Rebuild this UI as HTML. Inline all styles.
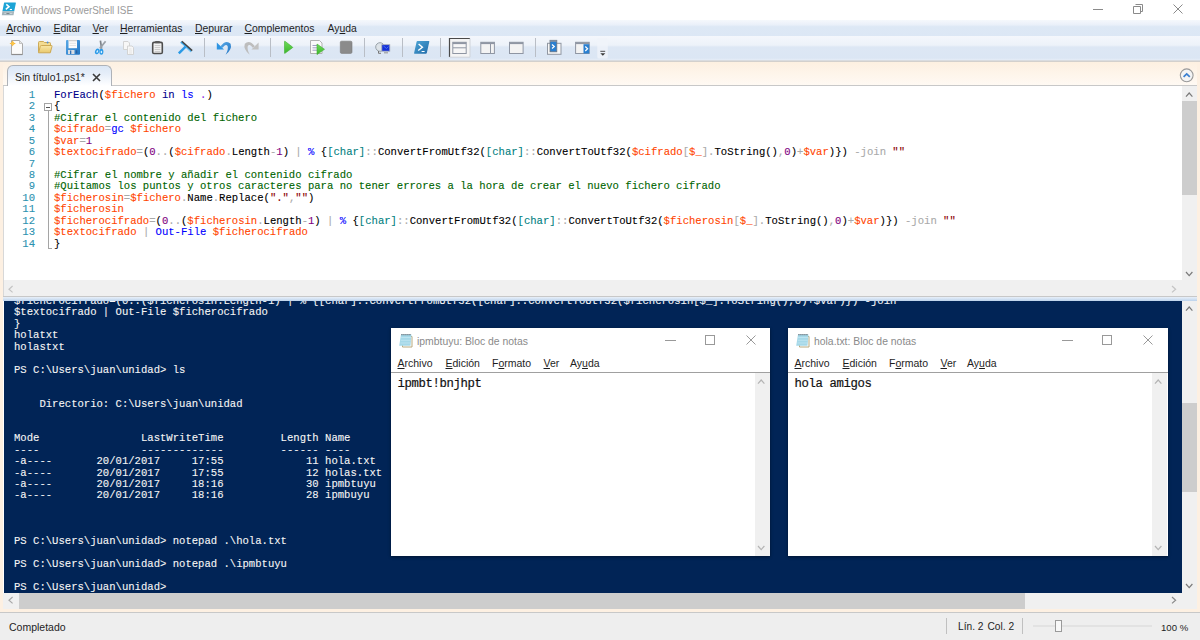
<!DOCTYPE html><html><head><meta charset="utf-8"><style>
*{box-sizing:border-box}
html,body{margin:0;padding:0;width:1200px;height:640px;overflow:hidden;background:#fff;position:relative;font-family:"Liberation Sans",sans-serif}
.a{position:absolute}
.t{position:absolute;white-space:pre;font-family:"Liberation Sans",sans-serif}
.m{position:absolute;white-space:pre;font-family:"Liberation Mono",monospace;-webkit-text-stroke:0.1px currentColor}
u{text-decoration:underline;text-decoration-thickness:1px;text-underline-offset:0.5px}
</style></head><body>
<div class="a" style="left:0;top:0;width:1200px;height:20px;background:#fff"></div>
<svg class="a" style="left:0;top:0" width="18" height="18" viewBox="0 0 18 18">
<path d="M4.3 2.6 H15.6 Q16 2.6 15.9 3 L14.2 11.3 H2.4 L4 3 Q4.1 2.6 4.3 2.6 Z" fill="#1ca4d6"/>
<path d="M2.4 11.3 H14.2 L13.5 15.3 H1.8 Z" fill="#a3b3ba"/>
<path d="M4.5 12.7 H12.5 L12.2 14 H4.2 Z" fill="#c9d4d8"/>
<path d="M6.5 12.9 H9.5 V13.8 H6.3 Z" fill="#5f6e74"/>
<path d="M6.3 4.4 L9 6.7 L5.8 9.3" stroke="#fff" stroke-width="1.5" fill="none"/>
<path d="M9.8 9.5 H12" stroke="#fff" stroke-width="1.1"/>
</svg>
<div class="t" style="left:20.7px;top:4.51px;font-size:10.5px;line-height:10.5px;color:#9a9a9a;transform:scaleX(0.946);transform-origin:0 0">Windows PowerShell ISE</div>
<div class="a" style="left:1093px;top:9px;width:10px;height:1px;background:#8a8a8a"></div>
<svg class="a" style="left:1132px;top:3px" width="12" height="12" viewBox="0 0 12 12">
<path d="M3.5 1.5 H10.5 V8.5 H8.5 M1.5 3.5 H8.5 V10.5 H1.5 Z" stroke="#8a8a8a" stroke-width="1" fill="none"/></svg>
<svg class="a" style="left:1173px;top:4px" width="10" height="10" viewBox="0 0 10 10">
<path d="M0.5 0.5 L9.5 9.5 M9.5 0.5 L0.5 9.5" stroke="#8a8a8a" stroke-width="1" fill="none"/></svg>
<div class="a" style="left:0;top:20px;width:1200px;height:16px;background:linear-gradient(#f5f8fc,#eaf0f9 30%,#dde8f5 42%,#dce7f5)"></div>
<div class="t" style="left:6.3px;top:23.70px;font-size:10.4px;line-height:10.4px;color:#1e1e1e;"><u>A</u>rchivo</div>
<div class="t" style="left:53.5px;top:23.70px;font-size:10.4px;line-height:10.4px;color:#1e1e1e;"><u>E</u>ditar</div>
<div class="t" style="left:92.5px;top:23.70px;font-size:10.4px;line-height:10.4px;color:#1e1e1e;"><u>V</u>er</div>
<div class="t" style="left:120px;top:23.70px;font-size:10.4px;line-height:10.4px;color:#1e1e1e;"><u>H</u>erramientas</div>
<div class="t" style="left:195px;top:23.70px;font-size:10.4px;line-height:10.4px;color:#1e1e1e;"><u>D</u>epurar</div>
<div class="t" style="left:244.5px;top:23.70px;font-size:10.4px;line-height:10.4px;color:#1e1e1e;"><u>C</u>omplementos</div>
<div class="t" style="left:327.6px;top:23.70px;font-size:10.4px;line-height:10.4px;color:#1e1e1e;">Ay<u>u</u>da</div>
<div class="a" style="left:0;top:36px;width:1200px;height:24px;background:linear-gradient(#f4f7fc,#edf2f9 38%,#dde7f4 46%,#dbe6f4 92%,#e6edf7)"></div>
<div class="a" style="left:0;top:60px;width:1200px;height:1px;background:#dadcdf"></div>
<div class="a" style="left:0;top:61px;width:1200px;height:1px;background:#d3d0cd"></div>
<svg class="a" style="left:0;top:0" width="620" height="62" viewBox="0 0 620 62">
<defs>
<linearGradient id="gfold" x1="0" y1="0" x2="0" y2="1"><stop offset="0" stop-color="#f8e7a8"/><stop offset="1" stop-color="#e9c96d"/></linearGradient>
<linearGradient id="gblue" x1="0" y1="0" x2="1" y2="1"><stop offset="0" stop-color="#5aa9e6"/><stop offset="1" stop-color="#1f74c4"/></linearGradient>
<linearGradient id="ggreen" x1="0" y1="0" x2="0" y2="1"><stop offset="0" stop-color="#6fdc5a"/><stop offset="1" stop-color="#3bb52c"/></linearGradient>
<linearGradient id="gps" x1="0" y1="0" x2="1" y2="1"><stop offset="0" stop-color="#4fa6d6"/><stop offset="1" stop-color="#1f6aa8"/></linearGradient>
</defs>
<!-- new -->
<path d="M11.5 40.5 H19.5 L22.5 43.5 V54.5 H11.5 Z" fill="#fbfbfb" stroke="#a9a9a9" stroke-width="1"/>
<path d="M11.5 54.5 H22.5" stroke="#8d8d8d" stroke-width="1.2"/>
<path d="M19.5 40.5 V43.5 H22.5" fill="#e6e6e6" stroke="#b9b9b9" stroke-width="0.8"/>
<path d="M12.7 40.2 L13.6 42.4 L15.9 43.4 L13.6 44.4 L12.7 46.6 L11.8 44.4 L9.5 43.4 L11.8 42.4 Z" fill="#f7b22a"/>
<circle cx="12.7" cy="43.4" r="1.6" fill="#fbc54a"/>
<!-- open -->
<path d="M38.5 42.5 Q38.5 41.5 39.5 41.5 H43.5 L44.5 42.5 H49.5 Q50.5 42.5 50.5 43.5 V51.5 H38.5 Z" fill="#f3dc92" stroke="#c9a44c" stroke-width="0.9"/>
<path d="M38.5 52.8 L40.3 46.3 Q40.5 45.5 41.5 45.5 H51.5 Q52.3 45.5 52 46.3 L50.3 52.8 Z" fill="url(#gfold)" stroke="#c9a44c" stroke-width="0.9"/>
<circle cx="47.6" cy="42.5" r="0.9" fill="#4a8fd8"/>
<!-- save -->
<rect x="66" y="40" width="14" height="14.7" rx="1" fill="url(#gblue)"/>
<rect x="68.5" y="40" width="8.5" height="8.2" fill="#fbfbfb"/>
<rect x="68.5" y="40" width="8.5" height="1.3" fill="#cfcfcf"/>
<path d="M69.5 43.3 H76 M69.5 45.5 H76" stroke="#d5d5d5" stroke-width="0.6"/>
<rect x="68" y="50" width="6.5" height="4" fill="#d8dde3"/>
<rect x="70" y="50.5" width="1.3" height="3.5" fill="#2f6fb5"/>
<rect x="75.8" y="50.3" width="1.5" height="3.2" fill="#2a5f9f"/>
<!-- cut -->
<path d="M100.4 40.6 L101.6 48.6" stroke="#7d838a" stroke-width="1.7"/>
<path d="M105.6 41.2 L99.9 48.4" stroke="#9ba1a8" stroke-width="1.7"/>
<ellipse cx="97.2" cy="51.3" rx="2.1" ry="2.9" fill="#2a9ae8" transform="rotate(25 97.2 51.3)"/>
<ellipse cx="101.4" cy="51.8" rx="2" ry="3" fill="#2a9ae8"/>
<ellipse cx="97.3" cy="51.5" rx="0.8" ry="1.3" fill="#d8f0ff" transform="rotate(25 97.3 51.5)"/>
<ellipse cx="101.4" cy="52" rx="0.8" ry="1.3" fill="#d8f0ff"/>
<!-- copy (disabled) -->
<path d="M123.5 41.5 H128 L129.5 43 V49.5 H123.5 Z" fill="#f7f7f7" stroke="#cfcfcf" stroke-width="0.9"/>
<path d="M127.5 46 H132 L133.5 47.5 V54.5 H127.5 Z" fill="#f7f7f7" stroke="#cfcfcf" stroke-width="0.9"/>
<path d="M129 49 H131.5 M129 51 H132 M129 53 H132" stroke="#d8d8d8" stroke-width="0.6"/>
<!-- paste -->
<rect x="152.7" y="42.4" width="9.6" height="11.1" rx="1.3" fill="#f4f4f4" stroke="#4d4d4d" stroke-width="1.6"/>
<rect x="155.2" y="41" width="4.6" height="2.2" rx="0.5" fill="#5a5a5a"/>
<path d="M154.6 45.6 H160.4 M154.6 47.6 H160.4 M154.6 49.6 H160.4 M154.6 51.6 H160.4" stroke="#bdbdbd" stroke-width="0.8"/>
<!-- clear -->
<path d="M180.2 42.8 L181.8 41.2 L192.2 50.6 L190.6 52.2 Z" fill="#3aa6ea"/>
<path d="M181.8 41.2 L192.2 50.6" stroke="#444" stroke-width="1.5"/>
<path d="M181.4 43.6 L190.6 51.8" stroke="#bfe6fb" stroke-width="0.7"/>
<path d="M185.6 46.6 L178.8 53.4" stroke="#2a9ae6" stroke-width="2.4"/>
<!-- separators -->
<path d="M204.5 38 V57 M270.5 38 V57 M364.5 38 V57 M402.5 38 V57 M440.5 38 V57 M535.5 38 V57" stroke="#b9bec6" stroke-width="1"/>
<!-- undo -->
<path d="M220.5 46.2 Q226 39.2 230.6 43.8 Q232.4 49.5 225.6 54.8 Q228.6 49.5 227.6 46 Q225.6 43.3 222.6 47.8 Z" fill="url(#gblue)"/>
<path d="M216.8 42.6 L216.8 49.6 L224 49.6 Z" fill="#2f95e2"/>
<!-- redo (disabled) -->
<g transform="translate(475.4 0) scale(-1 1)"><path d="M220.5 46.2 Q226 39.2 230.6 43.8 Q232.4 49.5 225.6 54.8 Q228.6 49.5 227.6 46 Q225.6 43.3 222.6 47.8 Z" fill="#bdbdbd"/>
<path d="M216.8 42.6 L216.8 49.6 L224 49.6 Z" fill="#c2c2c2"/></g>
<!-- run -->
<path d="M284.5 41.5 Q284.5 41 285 41.3 L292.5 47 Q293 47.3 292.5 47.7 L285 53.3 Q284.5 53.6 284.5 53 Z" fill="url(#ggreen)" stroke="#3fb030" stroke-width="0.6"/>
<!-- run selection -->
<path d="M310.5 40.5 H319.5 L322 43 V53.5 H310.5 Z" fill="#fafafa" stroke="#a9a9a9" stroke-width="0.9"/>
<path d="M312.5 45.5 H317 M312.5 47.8 H317 M312.5 50.2 H317" stroke="#8a86b8" stroke-width="0.8"/>
<path d="M317 44 L324.5 49.3 L317 54.6 Z" fill="url(#ggreen)" stroke="#3fb030" stroke-width="0.6"/>
<!-- stop -->
<rect x="340.3" y="41.2" width="11.7" height="12.2" rx="1.3" fill="#8b8b8b" stroke="#7a7a7a" stroke-width="0.6"/>
<!-- remote -->
<circle cx="380" cy="47" r="4.3" fill="#dde3e8" stroke="#9aa3aa" stroke-width="1"/>
<path d="M378.5 51 V53.3 H381" stroke="#777" stroke-width="1" fill="none"/>
<rect x="381.8" y="44.7" width="8" height="6.5" fill="#1430d8" stroke="#a9b0b8" stroke-width="0.8"/>
<path d="M383.5 46 L386.5 48.5 L388.5 46.5" stroke="#4f7ff0" stroke-width="0.8" fill="none"/>
<path d="M384 52.8 H388" stroke="#a0a0a0" stroke-width="1.2"/>
<!-- powershell -->
<path d="M417.5 41 H428.8 Q429.5 41 429.3 41.8 L426.8 53 Q426.6 53.8 425.8 53.8 H414.6 Q413.9 53.8 414.1 53 L416.6 41.8 Q416.8 41 417.5 41 Z" fill="url(#gps)"/>
<path d="M418.6 44 L422.4 47.2 L418.2 50.5" stroke="#fff" stroke-width="1.4" fill="none"/>
<path d="M421.6 51.5 H424.6" stroke="#fff" stroke-width="1"/>
<!-- layout selected -->
<rect x="449" y="38.2" width="21" height="19" fill="#f4f4f4"/>
<path d="M449.5 57 V38.5 H470" stroke="#4a4a4a" stroke-width="1.2" fill="none"/>
<path d="M470 38.5 V57.2 H449.5" stroke="#cfd4da" stroke-width="1" fill="none"/>
<rect x="452.8" y="42.3" width="13.4" height="11.2" fill="#f6f6f6" stroke="#8f96a3" stroke-width="1"/>
<rect x="452.8" y="42.3" width="13.4" height="1.8" fill="#8f96a3"/>
<path d="M453 47.8 H466" stroke="#8f96a3" stroke-width="1"/>
<!-- layout right -->
<rect x="480.8" y="42.3" width="13.6" height="11.2" fill="#f3f3f3" stroke="#8f96a3" stroke-width="1"/>
<rect x="480.8" y="42.3" width="13.6" height="1.8" fill="#8f96a3"/>
<path d="M490.5 44 V53.5" stroke="#8f96a3" stroke-width="1"/>
<!-- layout max -->
<rect x="509.5" y="42.3" width="13.6" height="11.2" fill="#f3f3f3" stroke="#8f96a3" stroke-width="1"/>
<rect x="509.5" y="42.3" width="13.6" height="1.8" fill="#8f96a3"/>
<!-- show script pane top -->
<rect x="547.5" y="43.3" width="13.5" height="11" fill="#f7f7f7" stroke="#9097a2" stroke-width="1"/>
<rect x="550" y="40.3" width="6.8" height="11.5" fill="#2a7fd0" stroke="#6b7480" stroke-width="0.8"/>
<rect x="550" y="40.3" width="6.8" height="1.5" fill="#8a93a0"/>
<path d="M552 44.5 L554.3 46.5 L552 48.5" stroke="#fff" stroke-width="1.2" fill="none"/>
<!-- script pane right -->
<rect x="575.6" y="42.3" width="13.6" height="11.2" fill="#f3f3f3" stroke="#8f96a3" stroke-width="1"/>
<rect x="575.6" y="42.3" width="13.6" height="1.8" fill="#8f96a3"/>
<rect x="583.5" y="44.2" width="5.8" height="9.3" fill="#2a7fd0"/>
<path d="M585.3 46.5 L587.6 48.8 L585.3 51" stroke="#fff" stroke-width="1.2" fill="none"/>
<!-- overflow -->
<rect x="597.3" y="38" width="10.5" height="20.5" rx="1.5" fill="#f0f4fa" opacity="0.8"/>
<path d="M600.3 51.3 H605.2" stroke="#3a3a3a" stroke-width="0.9"/>
<path d="M600.3 53.2 H605.3 L602.8 55.8 Z" fill="#3a3a3a"/>
</svg>
<div class="a" style="left:0;top:62px;width:1200px;height:24px;background:linear-gradient(#fdf0e1,#fffaf4)"></div>
<div class="a" style="left:0;top:85px;width:1200px;height:1px;background:#c8c8c8"></div>
<div class="a" style="left:7px;top:65px;width:105px;height:21px;border:1px solid #aeb2b8;border-bottom:none;border-radius:6px 6px 0 0;background:linear-gradient(#dbe7f6,#e6eef9 40%,#fff)"></div>
<div class="t" style="left:15px;top:72.50px;font-size:10.4px;line-height:10.4px;color:#1e1e1e;">Sin título1.ps1*</div>
<svg class="a" style="left:92px;top:73px" width="9" height="9" viewBox="0 0 9 9">
<path d="M1 1 L8 8 M8 1 L1 8" stroke="#3a3a3a" stroke-width="1.6"/></svg>
<svg class="a" style="left:1179px;top:68px" width="16" height="16" viewBox="0 0 16 16">
<circle cx="7.7" cy="7.3" r="6.4" fill="#f4f4f4" stroke="#9a9a9a" stroke-width="1.1"/>
<path d="M4.6 8.8 L7.7 5.9 L10.8 8.8" stroke="#3a7fd0" stroke-width="1.8" fill="none"/></svg>
<div class="a" style="left:0;top:62px;width:3px;height:550px;background:#fdf0e2"></div>
<div class="a" style="left:1197px;top:62px;width:3px;height:550px;background:#fdf0e2"></div>
<div class="a" style="left:0;top:609px;width:1200px;height:3px;background:#fdf0e2"></div>
<div class="a" style="left:3px;top:86px;width:1194px;height:210px;background:#fff;border-left:1px solid #d8d8d8"></div>
<div class="m" style="left:28.65px;top:89.97px;font-size:10.58px;line-height:11.43px;color:#2b91af">1</div>
<div class="m" style="left:28.65px;top:101.40px;font-size:10.58px;line-height:11.43px;color:#2b91af">2</div>
<div class="m" style="left:28.65px;top:112.83px;font-size:10.58px;line-height:11.43px;color:#2b91af">3</div>
<div class="m" style="left:28.65px;top:124.26px;font-size:10.58px;line-height:11.43px;color:#2b91af">4</div>
<div class="m" style="left:28.65px;top:135.69px;font-size:10.58px;line-height:11.43px;color:#2b91af">5</div>
<div class="m" style="left:28.65px;top:147.12px;font-size:10.58px;line-height:11.43px;color:#2b91af">6</div>
<div class="m" style="left:28.65px;top:158.55px;font-size:10.58px;line-height:11.43px;color:#2b91af">7</div>
<div class="m" style="left:28.65px;top:169.98px;font-size:10.58px;line-height:11.43px;color:#2b91af">8</div>
<div class="m" style="left:28.65px;top:181.41px;font-size:10.58px;line-height:11.43px;color:#2b91af">9</div>
<div class="m" style="left:22.30px;top:192.84px;font-size:10.58px;line-height:11.43px;color:#2b91af">10</div>
<div class="m" style="left:22.30px;top:204.27px;font-size:10.58px;line-height:11.43px;color:#2b91af">11</div>
<div class="m" style="left:22.30px;top:215.70px;font-size:10.58px;line-height:11.43px;color:#2b91af">12</div>
<div class="m" style="left:22.30px;top:227.13px;font-size:10.58px;line-height:11.43px;color:#2b91af">13</div>
<div class="m" style="left:22.30px;top:238.56px;font-size:10.58px;line-height:11.43px;color:#2b91af">14</div>
<div class="a" style="left:44px;top:103px;width:8px;height:8px;border:1px solid #a5a5a5;background:#fff"></div>
<div class="a" style="left:46px;top:106.5px;width:4px;height:1px;background:#555"></div>
<div class="a" style="left:48px;top:111px;width:1px;height:138px;background:#a5a5a5"></div>
<div class="a" style="left:48px;top:248px;width:4px;height:1px;background:#a5a5a5"></div>
<div class="m" style="left:54px;top:89.97px;font-size:10.58px;line-height:11.43px;color:#000"><span style="color:#00008b">ForEach</span><span style="color:#000000">(</span><span style="color:#ff4500">$fichero</span> <span style="color:#00008b">in</span> <span style="color:#0000ff">ls</span> <span style="color:#8a2be2">.</span><span style="color:#000000">)</span>
<span style="color:#000000">{</span>
<span style="color:#006400">#Cifrar el contenido del fichero</span>
<span style="color:#ff4500">$cifrado</span><span style="color:#a9a9a9">=</span><span style="color:#0000ff">gc</span> <span style="color:#ff4500">$fichero</span>
<span style="color:#ff4500">$var</span><span style="color:#a9a9a9">=</span><span style="color:#800080">1</span>
<span style="color:#ff4500">$textocifrado</span><span style="color:#a9a9a9">=</span><span style="color:#000000">(</span><span style="color:#800080">0</span><span style="color:#a9a9a9">..</span><span style="color:#000000">(</span><span style="color:#ff4500">$cifrado</span><span style="color:#a9a9a9">.</span><span style="color:#000000">Length</span><span style="color:#a9a9a9">-</span><span style="color:#800080">1</span><span style="color:#000000">)</span><span style="color:#a9a9a9"> | </span><span style="color:#0000ff">%</span> <span style="color:#000000">{</span><span style="color:#008080">[char]</span><span style="color:#a9a9a9">::</span><span style="color:#000000">ConvertFromUtf32</span><span style="color:#000000">(</span><span style="color:#008080">[char]</span><span style="color:#a9a9a9">::</span><span style="color:#000000">ConvertToUtf32</span><span style="color:#000000">(</span><span style="color:#ff4500">$cifrado</span><span style="color:#a9a9a9">[</span><span style="color:#ff4500">$_</span><span style="color:#a9a9a9">]</span><span style="color:#a9a9a9">.</span><span style="color:#000000">ToString</span><span style="color:#000000">()</span><span style="color:#a9a9a9">,</span><span style="color:#800080">0</span><span style="color:#000000">)</span><span style="color:#a9a9a9">+</span><span style="color:#ff4500">$var</span><span style="color:#000000">)}</span><span style="color:#000000">)</span> <span style="color:#a9a9a9">-join</span> <span style="color:#8b0000">""</span>

<span style="color:#006400">#Cifrar el nombre y añadir el contenido cifrado</span>
<span style="color:#006400">#Quitamos los puntos y otros caracteres para no tener errores a la hora de crear el nuevo fichero cifrado</span>
<span style="color:#ff4500">$ficherosin</span><span style="color:#a9a9a9">=</span><span style="color:#ff4500">$fichero</span><span style="color:#a9a9a9">.</span><span style="color:#000000">Name</span><span style="color:#a9a9a9">.</span><span style="color:#000000">Replace</span><span style="color:#000000">(</span><span style="color:#8b0000">"."</span><span style="color:#a9a9a9">,</span><span style="color:#8b0000">""</span><span style="color:#000000">)</span>
<span style="color:#ff4500">$ficherosin</span>
<span style="color:#ff4500">$ficherocifrado</span><span style="color:#a9a9a9">=</span><span style="color:#000000">(</span><span style="color:#800080">0</span><span style="color:#a9a9a9">..</span><span style="color:#000000">(</span><span style="color:#ff4500">$ficherosin</span><span style="color:#a9a9a9">.</span><span style="color:#000000">Length</span><span style="color:#a9a9a9">-</span><span style="color:#800080">1</span><span style="color:#000000">)</span><span style="color:#a9a9a9"> | </span><span style="color:#0000ff">%</span> <span style="color:#000000">{</span><span style="color:#008080">[char]</span><span style="color:#a9a9a9">::</span><span style="color:#000000">ConvertFromUtf32</span><span style="color:#000000">(</span><span style="color:#008080">[char]</span><span style="color:#a9a9a9">::</span><span style="color:#000000">ConvertToUtf32</span><span style="color:#000000">(</span><span style="color:#ff4500">$ficherosin</span><span style="color:#a9a9a9">[</span><span style="color:#ff4500">$_</span><span style="color:#a9a9a9">]</span><span style="color:#a9a9a9">.</span><span style="color:#000000">ToString</span><span style="color:#000000">()</span><span style="color:#a9a9a9">,</span><span style="color:#800080">0</span><span style="color:#000000">)</span><span style="color:#a9a9a9">+</span><span style="color:#ff4500">$var</span><span style="color:#000000">)}</span><span style="color:#000000">)</span> <span style="color:#a9a9a9">-join</span> <span style="color:#8b0000">""</span>
<span style="color:#ff4500">$textocifrado</span><span style="color:#a9a9a9"> | </span><span style="color:#0000ff">Out-File</span> <span style="color:#ff4500">$ficherocifrado</span>
<span style="color:#000000">}</span></div>
<div class="a" style="left:1182px;top:86px;width:15px;height:194px;background:#f0f0f0"></div>
<div class="a" style="left:1182px;top:101px;width:15px;height:94px;background:#cdcdcd"></div>
<svg class="a" style="left:1184.00px;top:90.80px" width="10.40" height="7.60" viewBox="0 0 10.40 7.60"><path d="M2 5.6 L5.2 2 L8.4 5.6" stroke="#7a7a7a" stroke-width="1.2" fill="none"/></svg>
<svg class="a" style="left:1184.00px;top:269.80px" width="10.40" height="7.60" viewBox="0 0 10.40 7.60"><path d="M2 2 L5.2 5.6 L8.4 2" stroke="#7a7a7a" stroke-width="1.2" fill="none"/></svg>
<div class="a" style="left:4px;top:280px;width:1193px;height:16px;background:#f0f0f0"></div>
<svg class="a" style="left:7.20px;top:283.70px" width="7.60" height="10.40" viewBox="0 0 7.60 10.40"><path d="M5.6 2 L2 5.2 L5.6 8.4" stroke="#c4c4c4" stroke-width="1.2" fill="none"/></svg>
<svg class="a" style="left:1170.40px;top:283.70px" width="7.60" height="10.40" viewBox="0 0 7.60 10.40"><path d="M2 2 L5.6 5.2 L2 8.4" stroke="#c4c4c4" stroke-width="1.2" fill="none"/></svg>
<div class="a" style="left:3px;top:296px;width:1194px;height:1px;background:#c8c8c8"></div>
<div class="a" style="left:3px;top:297px;width:1194px;height:4px;background:linear-gradient(#e8eff8,#d3e2f3 50%,#bcd2ec)"></div>
<div class="a" style="left:3.5px;top:301px;width:1178.5px;height:292px;background:#012456;overflow:hidden">
<div class="m" style="left:10.5px;top:-4.96px;font-size:10.58px;line-height:11.43px;color:#f5f5f5">$ficherocifrado=(0..($ficherosin.Length-1) | % {[char]::ConvertFromUtf32([char]::ConvertToUtf32($ficherosin[$_].ToString(),0)+$var)}) -join ""
$textocifrado | Out-File $ficherocifrado
}
holatxt
holastxt

PS C:\Users\juan\unidad&gt; ls


    Directorio: C:\Users\juan\unidad


Mode                LastWriteTime         Length Name
----                -------------         ------ ----
-a----       20/01/2017     17:55             11 hola.txt
-a----       20/01/2017     17:55             12 holas.txt
-a----       20/01/2017     18:16             30 ipmbtuyu
-a----       20/01/2017     18:16             28 ipmbuyu



PS C:\Users\juan\unidad&gt; notepad .\hola.txt

PS C:\Users\juan\unidad&gt; notepad .\ipmbtuyu

PS C:\Users\juan\unidad&gt;</div>
</div>
<div class="a" style="left:1182px;top:301px;width:15px;height:308px;background:#f0f0f0"></div>
<div class="a" style="left:1182px;top:403px;width:15px;height:89px;background:#cdcdcd"></div>
<svg class="a" style="left:1183.80px;top:305.40px" width="10.40" height="7.60" viewBox="0 0 10.40 7.60"><path d="M2 5.6 L5.2 2 L8.4 5.6" stroke="#7a7a7a" stroke-width="1.2" fill="none"/></svg>
<svg class="a" style="left:1183.80px;top:582.20px" width="10.40" height="7.60" viewBox="0 0 10.40 7.60"><path d="M2 2 L5.2 5.6 L8.4 2" stroke="#7a7a7a" stroke-width="1.2" fill="none"/></svg>
<div class="a" style="left:3px;top:593px;width:1179px;height:16px;background:#f0f0f0"></div>
<div class="a" style="left:19px;top:593px;width:1006px;height:16px;background:#cdcdcd"></div>
<svg class="a" style="left:7.20px;top:595.30px" width="7.60" height="10.40" viewBox="0 0 7.60 10.40"><path d="M5.6 2 L2 5.2 L5.6 8.4" stroke="#a8a8a8" stroke-width="1.2" fill="none"/></svg>
<svg class="a" style="left:1170.20px;top:595.30px" width="7.60" height="10.40" viewBox="0 0 7.60 10.40"><path d="M2 2 L5.6 5.2 L2 8.4" stroke="#8a8a8a" stroke-width="1.2" fill="none"/></svg>
<div class="a" style="left:0;top:612px;width:1200px;height:1px;background:#c8c8c8"></div>
<div class="a" style="left:0;top:613px;width:1200px;height:27px;background:#eeeeee"></div>
<div class="t" style="left:9px;top:621.91px;font-size:10.5px;line-height:10.5px;color:#1e1e1e;">Completado</div>
<div class="a" style="left:946px;top:618px;width:1px;height:16px;background:#c0c0c0"></div>
<div class="t" style="left:958px;top:622.17px;font-size:10.2px;line-height:10.2px;color:#1e1e1e;">Lín. 2</div>
<div class="t" style="left:987.5px;top:622.17px;font-size:10.2px;line-height:10.2px;color:#1e1e1e;">Col. 2</div>
<div class="a" style="left:1022px;top:618px;width:1px;height:16px;background:#c0c0c0"></div>
<div class="a" style="left:1033px;top:625px;width:119px;height:2px;background:#e2e2e2"></div>
<div class="a" style="left:1055px;top:620px;width:7px;height:12px;background:#f8f8f8;border:1px solid #9a9a9a"></div>
<div class="t" style="left:1161px;top:622.67px;font-size:9.6px;line-height:9.6px;color:#1e1e1e;">100 %</div>
<div class="a" style="left:391px;top:328px;width:379px;height:228px;background:#fff;box-shadow:0 1px 3px rgba(0,0,0,0.45)"></div>
<svg class="a" style="left:398px;top:333px" width="16" height="16" viewBox="0 0 16 16">
<path d="M4.5 3.5 H14 V14 H4.5 Z" fill="#fff" stroke="#b8a97e" stroke-width="1"/>
<path d="M3 1.5 H13.5 L12.5 12.8 H1.2 Z" fill="#a5d8e8"/>
<path d="M3.2 4.5 H13 M2.8 7.3 H12.8 M2.5 10 H12.6" stroke="#c2e6f1" stroke-width="0.8"/>
<path d="M3.4 1.6 H13.2" stroke="#55606a" stroke-width="1.2" stroke-dasharray="1.1 0.9"/></svg>
<div class="t" style="left:417px;top:336.50px;font-size:10.4px;line-height:10.4px;color:#8a8a8a;">ipmbtuyu: Bloc de notas</div>
<div class="a" style="left:665px;top:340px;width:11px;height:1px;background:#999"></div>
<div class="a" style="left:705px;top:335px;width:10px;height:10px;border:1px solid #999"></div>
<svg class="a" style="left:746px;top:335px" width="10" height="10" viewBox="0 0 10 10"><path d="M0.5 0.5 L9.5 9.5 M9.5 0.5 L0.5 9.5" stroke="#999" stroke-width="1"/></svg>
<div class="t" style="left:397.5px;top:357.71px;font-size:10.5px;line-height:10.5px;color:#1e1e1e;"><u>A</u>rchivo</div>
<div class="t" style="left:445.5px;top:357.71px;font-size:10.5px;line-height:10.5px;color:#1e1e1e;"><u>E</u>dición</div>
<div class="t" style="left:492px;top:357.71px;font-size:10.5px;line-height:10.5px;color:#1e1e1e;">F<u>o</u>rmato</div>
<div class="t" style="left:543.5px;top:357.71px;font-size:10.5px;line-height:10.5px;color:#1e1e1e;"><u>V</u>er</div>
<div class="t" style="left:570px;top:357.71px;font-size:10.5px;line-height:10.5px;color:#1e1e1e;">Ay<u>u</u>da</div>
<div class="a" style="left:391px;top:372px;width:379px;height:1px;background:#a0a0a0"></div>
<div class="a" style="left:755px;top:373px;width:15px;height:183px;background:#f0f0f0"></div>
<svg class="a" style="left:756.00px;top:377.80px" width="10.40" height="7.60" viewBox="0 0 10.40 7.60"><path d="M2 5.6 L5.2 2 L8.4 5.6" stroke="#b4b4b4" stroke-width="1.2" fill="none"/></svg>
<svg class="a" style="left:756.00px;top:543.80px" width="10.40" height="7.60" viewBox="0 0 10.40 7.60"><path d="M2 2 L5.2 5.6 L8.4 2" stroke="#b4b4b4" stroke-width="1.2" fill="none"/></svg>
<div class="m" style="left:397.5px;top:376.53px;font-size:12.3px;line-height:14px;color:#111;letter-spacing:-0.380px;-webkit-text-stroke:0.2px #111">ipmbt!bnjhpt</div>
<div class="a" style="left:788px;top:328px;width:380px;height:228px;background:#fff;box-shadow:0 1px 3px rgba(0,0,0,0.45)"></div>
<svg class="a" style="left:795px;top:333px" width="16" height="16" viewBox="0 0 16 16">
<path d="M4.5 3.5 H14 V14 H4.5 Z" fill="#fff" stroke="#b8a97e" stroke-width="1"/>
<path d="M3 1.5 H13.5 L12.5 12.8 H1.2 Z" fill="#a5d8e8"/>
<path d="M3.2 4.5 H13 M2.8 7.3 H12.8 M2.5 10 H12.6" stroke="#c2e6f1" stroke-width="0.8"/>
<path d="M3.4 1.6 H13.2" stroke="#55606a" stroke-width="1.2" stroke-dasharray="1.1 0.9"/></svg>
<div class="t" style="left:814px;top:336.50px;font-size:10.4px;line-height:10.4px;color:#8a8a8a;">hola.txt: Bloc de notas</div>
<div class="a" style="left:1062px;top:340px;width:11px;height:1px;background:#999"></div>
<div class="a" style="left:1102px;top:335px;width:10px;height:10px;border:1px solid #999"></div>
<svg class="a" style="left:1143px;top:335px" width="10" height="10" viewBox="0 0 10 10"><path d="M0.5 0.5 L9.5 9.5 M9.5 0.5 L0.5 9.5" stroke="#999" stroke-width="1"/></svg>
<div class="t" style="left:794.5px;top:357.71px;font-size:10.5px;line-height:10.5px;color:#1e1e1e;"><u>A</u>rchivo</div>
<div class="t" style="left:842.5px;top:357.71px;font-size:10.5px;line-height:10.5px;color:#1e1e1e;"><u>E</u>dición</div>
<div class="t" style="left:889px;top:357.71px;font-size:10.5px;line-height:10.5px;color:#1e1e1e;">F<u>o</u>rmato</div>
<div class="t" style="left:940.5px;top:357.71px;font-size:10.5px;line-height:10.5px;color:#1e1e1e;"><u>V</u>er</div>
<div class="t" style="left:967px;top:357.71px;font-size:10.5px;line-height:10.5px;color:#1e1e1e;">Ay<u>u</u>da</div>
<div class="a" style="left:788px;top:372px;width:380px;height:1px;background:#a0a0a0"></div>
<div class="a" style="left:1152px;top:373px;width:15px;height:183px;background:#f0f0f0"></div>
<svg class="a" style="left:1153.00px;top:377.80px" width="10.40" height="7.60" viewBox="0 0 10.40 7.60"><path d="M2 5.6 L5.2 2 L8.4 5.6" stroke="#b4b4b4" stroke-width="1.2" fill="none"/></svg>
<svg class="a" style="left:1153.00px;top:543.80px" width="10.40" height="7.60" viewBox="0 0 10.40 7.60"><path d="M2 2 L5.2 5.6 L8.4 2" stroke="#b4b4b4" stroke-width="1.2" fill="none"/></svg>
<div class="m" style="left:794.5px;top:376.53px;font-size:12.3px;line-height:14px;color:#111;letter-spacing:-0.380px;-webkit-text-stroke:0.2px #111">hola amigos</div>
</body></html>
